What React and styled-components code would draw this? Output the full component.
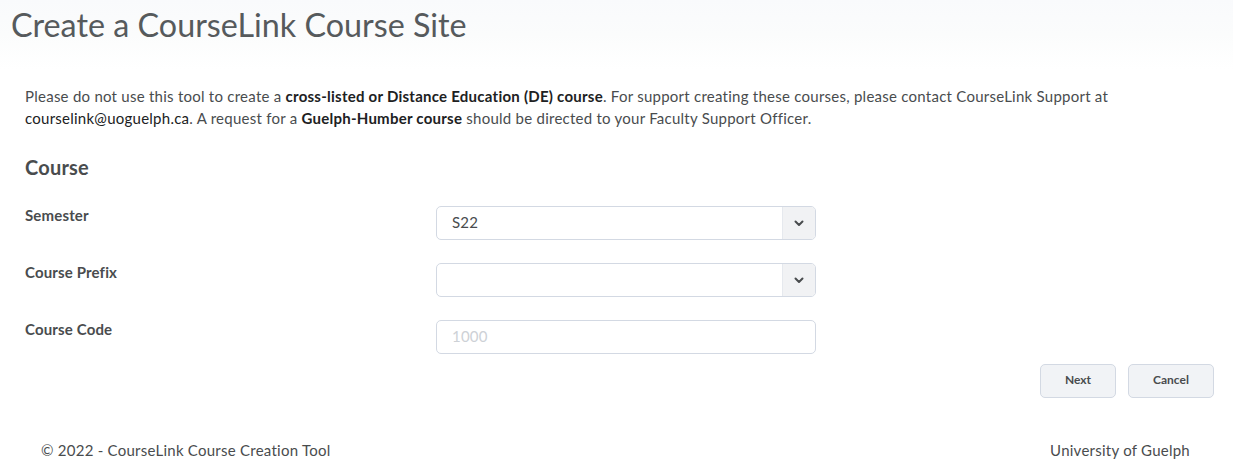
import React from 'react';
import styled, { createGlobalStyle } from 'styled-components';

const GlobalStyle = createGlobalStyle`
  body {
    margin: 0;
    background: #ffffff;
    font-family: Lato, "Noto Sans", sans-serif;
    color: #494c4e;
  }
`;

const Chevron = () => (
  <svg width="10" height="7" viewBox="0 0 10 7">
    <path d="M1.5 1.5 L5 5 L8.5 1.5" fill="none" stroke="#494c4e" strokeWidth="2" strokeLinecap="round" strokeLinejoin="round" />
  </svg>
);

const App = () => {
  return (
    <>
      <GlobalStyle />
      <Header>
        <Title>Create a CourseLink Course Site</Title>
      </Header>
      <Main>
        <Notice>
          Please do not use this tool to create a <b>cross-listed or Distance Education (DE) course</b>. For support
          creating these courses, please contact CourseLink Support at <Mail>courselink@uoguelph.ca</Mail>. A request
          for a <b>Guelph-Humber course</b> should be directed to your Faculty Support Officer.
        </Notice>
        <SectionTitle>Course</SectionTitle>
        <Form>
          <Row>
            <Label>Semester</Label>
            <Select>
              <SelectValue>S22</SelectValue>
              <Arrow>
                <Chevron />
              </Arrow>
            </Select>
          </Row>
          <Row>
            <Label>Course Prefix</Label>
            <Select>
              <SelectValue />
              <Arrow>
                <Chevron />
              </Arrow>
            </Select>
          </Row>
          <Row>
            <Label>Course Code</Label>
            <Input placeholder="1000" />
          </Row>
        </Form>
        <Actions>
          <Button $w={76}>Next</Button>
          <Button $w={86}>Cancel</Button>
        </Actions>
      </Main>
      <Footer>
        <span>© 2022 - CourseLink Course Creation Tool</span>
        <span>University of Guelph</span>
      </Footer>
    </>
  );
};

export default App;

const Header = styled.header`
  height: 69px;
  padding: 5px 11px 0;
  box-sizing: border-box;
  background: linear-gradient(to bottom, #f9fafc 0%, #fbfcfc 50%, #ffffff 100%);
`;

const Title = styled.h1`
  margin: 0;
  font-size: 32.3px;
  font-weight: 400;
  line-height: 40px;
  color: #565a5c;
`;

const Main = styled.main`
  padding: 16px 19px 0 25px;
`;

const Notice = styled.p`
  margin: 0;
  font-size: 15px;
  line-height: 22px;
  letter-spacing: 0.25px;
  color: #494c4e;
  b {
    font-weight: 700;
    color: #202122;
  }
`;

const Mail = styled.span`
  color: #202122;
`;

const SectionTitle = styled.h2`
  margin: 24px 0 0;
  font-size: 20px;
  font-weight: 700;
  line-height: 29px;
  letter-spacing: 0.2px;
  color: #494c4e;
`;

const Form = styled.div`
  display: flex;
  flex-direction: column;
  gap: 23px;
  margin-top: 24px;
`;

const Row = styled.div`
  display: grid;
  grid-template-columns: 411px 380px;
  align-items: start;
`;

const Label = styled.label`
  font-size: 15px;
  font-weight: 700;
  line-height: 19px;
  letter-spacing: 0.15px;
  color: #494c4e;
`;

const Select = styled.div`
  display: flex;
  height: 34px;
  box-sizing: border-box;
  border: 1px solid #d3d9e3;
  border-radius: 5px;
  background: #ffffff;
  overflow: hidden;
`;

const SelectValue = styled.div`
  flex: 1;
  padding: 0 15px 3px;
  display: flex;
  align-items: center;
  font-size: 15px;
  letter-spacing: 0.2px;
  color: #494c4e;
`;

const Arrow = styled.div`
  width: 32px;
  display: flex;
  align-items: center;
  justify-content: center;
  background: #f1f2f4;
  border-left: 1px solid #e6e9ee;
`;

const Input = styled.input`
  height: 34px;
  box-sizing: border-box;
  width: 380px;
  border: 1px solid #d3d9e3;
  border-radius: 5px;
  padding: 0 15px 3px;
  font-family: Lato, "Noto Sans", sans-serif;
  font-size: 15px;
  letter-spacing: 0.2px;
  color: #494c4e;
  outline: none;
  &::placeholder {
    color: #cdd1d6;
  }
`;

const Actions = styled.div`
  display: flex;
  justify-content: flex-end;
  gap: 12px;
  margin-top: 10px;
`;

const Button = styled.button`
  width: ${(p) => p.$w}px;
  height: 34px;
  padding: 0 0 3px;
  border: 1px solid #d3d9e3;
  border-radius: 5px;
  background: #f1f3f6;
  font-family: Lato, "Noto Sans", sans-serif;
  font-size: 12px;
  font-weight: 700;
  color: #494c4e;
  cursor: pointer;
`;

const Footer = styled.footer`
  display: flex;
  justify-content: space-between;
  padding: 42px 43px 0 41px;
  font-size: 15px;
  line-height: 20px;
  letter-spacing: 0.25px;
  color: #494c4e;
`;
